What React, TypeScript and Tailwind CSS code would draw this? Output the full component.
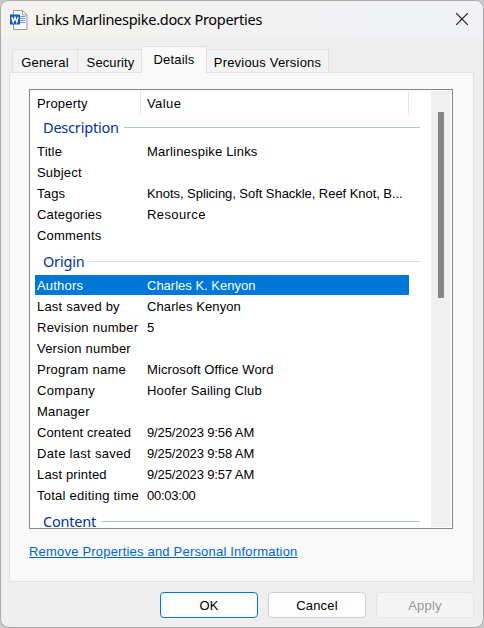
import React from "react";

type Item = { name: string; value?: string; selected?: boolean; spacing?: string; nameSpacing?: string };

const description: Item[] = [
  { name: "Title", value: "Marlinespike Links" },
  { name: "Subject" },
  { name: "Tags", value: "Knots, Splicing, Soft Shackle, Reef Knot, B...", spacing: "tracking-[-0.05px]" },
  { name: "Categories", value: "Resource", spacing: "tracking-[0.4px]" },
  { name: "Comments" },
];

const origin: Item[] = [
  { name: "Authors", value: "Charles K. Kenyon", selected: true, spacing: "tracking-[0px]" },
  { name: "Last saved by", value: "Charles Kenyon", spacing: "tracking-[0.1px]" },
  { name: "Revision number", value: "5", nameSpacing: "tracking-[0.25px]" },
  { name: "Version number" },
  { name: "Program name", value: "Microsoft Office Word", spacing: "tracking-[0.1px]", nameSpacing: "tracking-[0.25px]" },
  { name: "Company", value: "Hoofer Sailing Club", spacing: "tracking-[0.15px]", nameSpacing: "tracking-[0.35px]" },
  { name: "Manager" },
  { name: "Content created", value: "9/25/2023 9:56 AM", spacing: "tracking-[-0.12px]", nameSpacing: "tracking-[0.1px]" },
  { name: "Date last saved", value: "9/25/2023 9:58 AM", spacing: "tracking-[-0.12px]", nameSpacing: "tracking-[0.3px]" },
  { name: "Last printed", value: "9/25/2023 9:57 AM", spacing: "tracking-[-0.12px]", nameSpacing: "tracking-[0.15px]" },
  { name: "Total editing time", value: "00:03:00", spacing: "tracking-[-0.25px]", nameSpacing: "tracking-[0.25px]" },
];

function Row({ item }: { item: Item }) {
  return (
    <div
      className={
        "mb-px ml-[5px] flex h-5 w-[374px] whitespace-pre pl-0.5 pt-px leading-5 " +
        (item.selected ? "bg-[#0078d7] text-white" : "")
      }
    >
      <span className={"w-[110px] shrink-0 " + (item.nameSpacing ?? "")}>{item.name}</span>
      <span className={item.spacing ?? ""}>{item.value}</span>
    </div>
  );
}

function Heading({ label, line }: { label: string; line: string }) {
  return (
    <div className="flex h-[26px] w-[390px] items-center gap-[5px] pb-0.5 pl-[13px]">
      <span className="font-['Noto_Sans',sans-serif] text-[14.5px] leading-5 tracking-[-0.2px] text-[#003399]">{label}</span>
      <span className={"h-px flex-1 " + line} />
    </div>
  );
}

function WordIcon() {
  return (
    <svg className="h-5 w-[18px] shrink-0" viewBox="0 0 18 20" fill="none">
      <path d="M3.5.5h9l4.500 4.500v14.500H3.500z" fill="#fff" stroke="#999" />
      <path d="M12.500.500V5H17" stroke="#999" />
      <path d="M10 6.500h5.500M10 8.500h5.500M10 10.500h5.500M10 12.500h5.500" stroke="#619fe0" />
      <path d="M0 4.500h10v10H0z" fill="#1857b8" />
      <path d="m1.800 7 1.400 5L5 7.500l1.800 4.500 1.400-5" stroke="#fff" strokeWidth="1.400" />
    </svg>
  );
}

export default function App() {
  return (
    <div className="h-[628px] w-[484px] overflow-hidden bg-[#c9c9c9] font-['Liberation_Sans',Arial,sans-serif] text-[13px] tracking-[0.2px] text-black">
      <div className="flex h-full w-full flex-col overflow-hidden rounded-[9px] border border-[#aaa] bg-[#efefef]">
        <header className="flex h-[37px] shrink-0 items-center bg-linear-to-r from-[#f4f2ec] via-[#f2f2f2] to-[#f0f2f7] pl-[9px] pr-[14px]">
          <WordIcon />
          <h1 className="ml-[7px] flex-1 whitespace-nowrap font-['Noto_Sans',sans-serif] text-[14.5px] tracking-[-0.28px]">
            Links Marlinespike.docx Properties
          </h1>
          <svg className="mb-px h-[14px] w-[14px]" viewBox="0 0 14 14" fill="none" stroke="#1a1a1a" strokeWidth="1.200">
            <path d="m1.200 1.200 11.600 11.600m0-11.600L1.200 12.800" />
          </svg>
        </header>

        <nav className="mt-2 flex h-[26px] shrink-0 items-end pl-[11px] whitespace-nowrap">
          <div className="flex h-[23px] w-[65px] items-center justify-center border-l border-t border-[#e1e1e1] bg-[#f3f3f3] pt-1">General</div>
          <div className="flex h-[23px] w-[64px] items-center justify-center border-l border-t border-[#e1e1e1] bg-[#f3f3f3] pl-0.5 pt-1 tracking-[0.1px]">Security</div>
          <div className="z-10 -mb-px flex h-[27px] w-[66px] items-center justify-center border-x border-t border-[#e1e1e1] bg-[#f9f9f9]">Details</div>
          <div className="flex h-[23px] w-[122px] items-center justify-center border-r border-t border-[#e1e1e1] bg-[#f3f3f3] pt-1">Previous Versions</div>
        </nav>

        <main className="ml-2 h-[510px] w-[465px] shrink-0 border border-[#e1e1e1] bg-[#f9f9f9] pl-[19px] pt-4">
          <section className="flex h-[440px] w-[424px] overflow-hidden border border-[#828790] bg-white">
            <div className="w-[401px] shrink-0 pt-px">
              <div className="flex h-6 w-[379px] items-center border-r border-[#e5e5e5]">
                <span className="flex h-6 w-[111px] items-center border-r border-[#e5e5e5] pl-[7px] pt-0.5">Property</span>
                <span className="pl-1.5 pt-0.5 tracking-[0.4px]">Value</span>
              </div>
              <Heading label="Description" line="bg-[#b0bfe2]" />
              {description.map((item) => (
                <Row key={item.name} item={item} />
              ))}
              <div className="h-[3px]" />
              <Heading label="Origin" line="bg-[#d0dbec]" />
              {origin.map((item) => (
                <Row key={item.name} item={item} />
              ))}
              <div className="h-[3px]" />
              <Heading label="Content" line="bg-[#b0bfe2]" />
            </div>
            <div className="mt-px h-[436px] w-5 bg-[#f0f0f0] pl-[7px] pt-[21px]">
              <div className="h-[186px] w-1.5 bg-[#858585]" />
            </div>
          </section>
          <a className="mt-[13px] block w-[268px] whitespace-nowrap leading-5 text-[#0066cc] underline">
            Remove Properties and Personal Information
          </a>
        </main>

        <footer className="mt-[10px] flex gap-[10px] pl-[159px]">
          <button className="h-[26px] w-[98px] rounded border border-[#0078d4] bg-[#fdfdfd] pt-0.5">OK</button>
          <button className="h-[26px] w-[98px] rounded border border-[#d0d0d0] bg-[#fdfdfd] pt-0.5">Cancel</button>
          <button className="h-[26px] w-[98px] rounded border border-[#e5e5e5] bg-[#f5f5f5] pt-0.5 text-[#969696]">Apply</button>
        </footer>
      </div>
    </div>
  );
}
